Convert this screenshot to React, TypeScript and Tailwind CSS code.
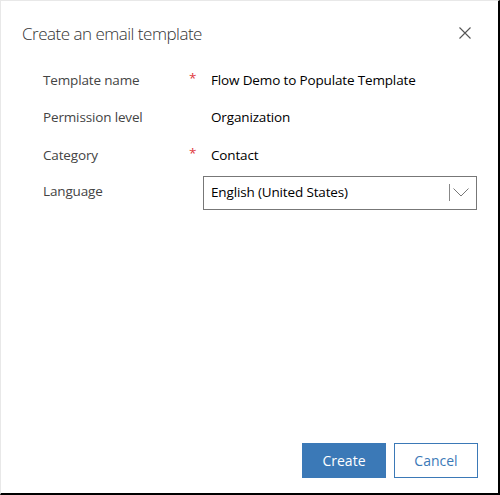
import React from "react";

export default function App() {
  const font = { fontFamily: '"Open Sans", "Noto Sans", sans-serif' };
  return (
    <div
      className="w-[500px] h-[495px] bg-white border-l border-t border-l-[#e8e8e8] border-t-[#e8e8e8] border-r-2 border-b-2 border-r-black border-b-black flex flex-col"
      style={font}
    >
      <div className="flex items-start justify-between pl-[21px] pr-[27px] pt-[21px]">
        <div className="text-[17px] leading-[24px] text-[#333] font-light tracking-[-0.5px]">Create an email template</div>
        <div className="pt-[5px]">
          <svg width="12" height="12" viewBox="0 0 12 12">
            <path d="M0.5 0.5 L11.5 11.5 M11.5 0.5 L0.5 11.5" stroke="#555" strokeWidth="1.1" fill="none" />
          </svg>
        </div>
      </div>

      <div className="flex flex-col pl-[42px] pt-[15px] text-[13.5px] tracking-[-0.15px]">
        <div className="flex items-center h-[37.5px]">
          <div className="w-[146px] text-[#444]">Template name</div>
          <div className="w-[22px] text-[#e0393e] self-start pt-[10px] leading-[14px]">*</div>
          <div className="text-black">Flow Demo to Populate Template</div>
        </div>
        <div className="flex items-center h-[37.5px]">
          <div className="w-[146px] text-[#444]">Permission level</div>
          <div className="w-[22px]"></div>
          <div className="text-black">Organization</div>
        </div>
        <div className="flex items-center h-[37.5px]">
          <div className="w-[146px] text-[#444]">Category</div>
          <div className="w-[22px] text-[#e0393e] self-start pt-[10px] leading-[14px]">*</div>
          <div className="text-black">Contact</div>
        </div>
        <div className="flex items-center h-[34px] mt-[2px]">
          <div className="w-[160px] text-[#444] -mt-[3px]">Language</div>
          <div className="w-[274px] h-[34px] border border-[#777] flex items-center pl-[7px] pr-[4px]">
            <div className="flex-1 text-black">English (United States)</div>
            <div className="w-px h-[17px] bg-[#888]"></div>
            <div className="w-[22px] flex justify-center">
              <svg width="16" height="9" viewBox="0 0 16 9">
                <path d="M0.5 0.5 L8 8 L15.5 0.5" stroke="#777" strokeWidth="1" fill="none" />
              </svg>
            </div>
          </div>
        </div>
      </div>

      <div className="mt-auto flex justify-end gap-[8px] pr-[20px] pb-[15px]">
        <button className="w-[84px] h-[35px] bg-[#3b79b7] text-white text-[14px]">Create</button>
        <button className="w-[84px] h-[35px] border border-[#3b79b7] bg-white text-[#3b79b7] text-[14px]">Cancel</button>
      </div>
    </div>
  );
}
